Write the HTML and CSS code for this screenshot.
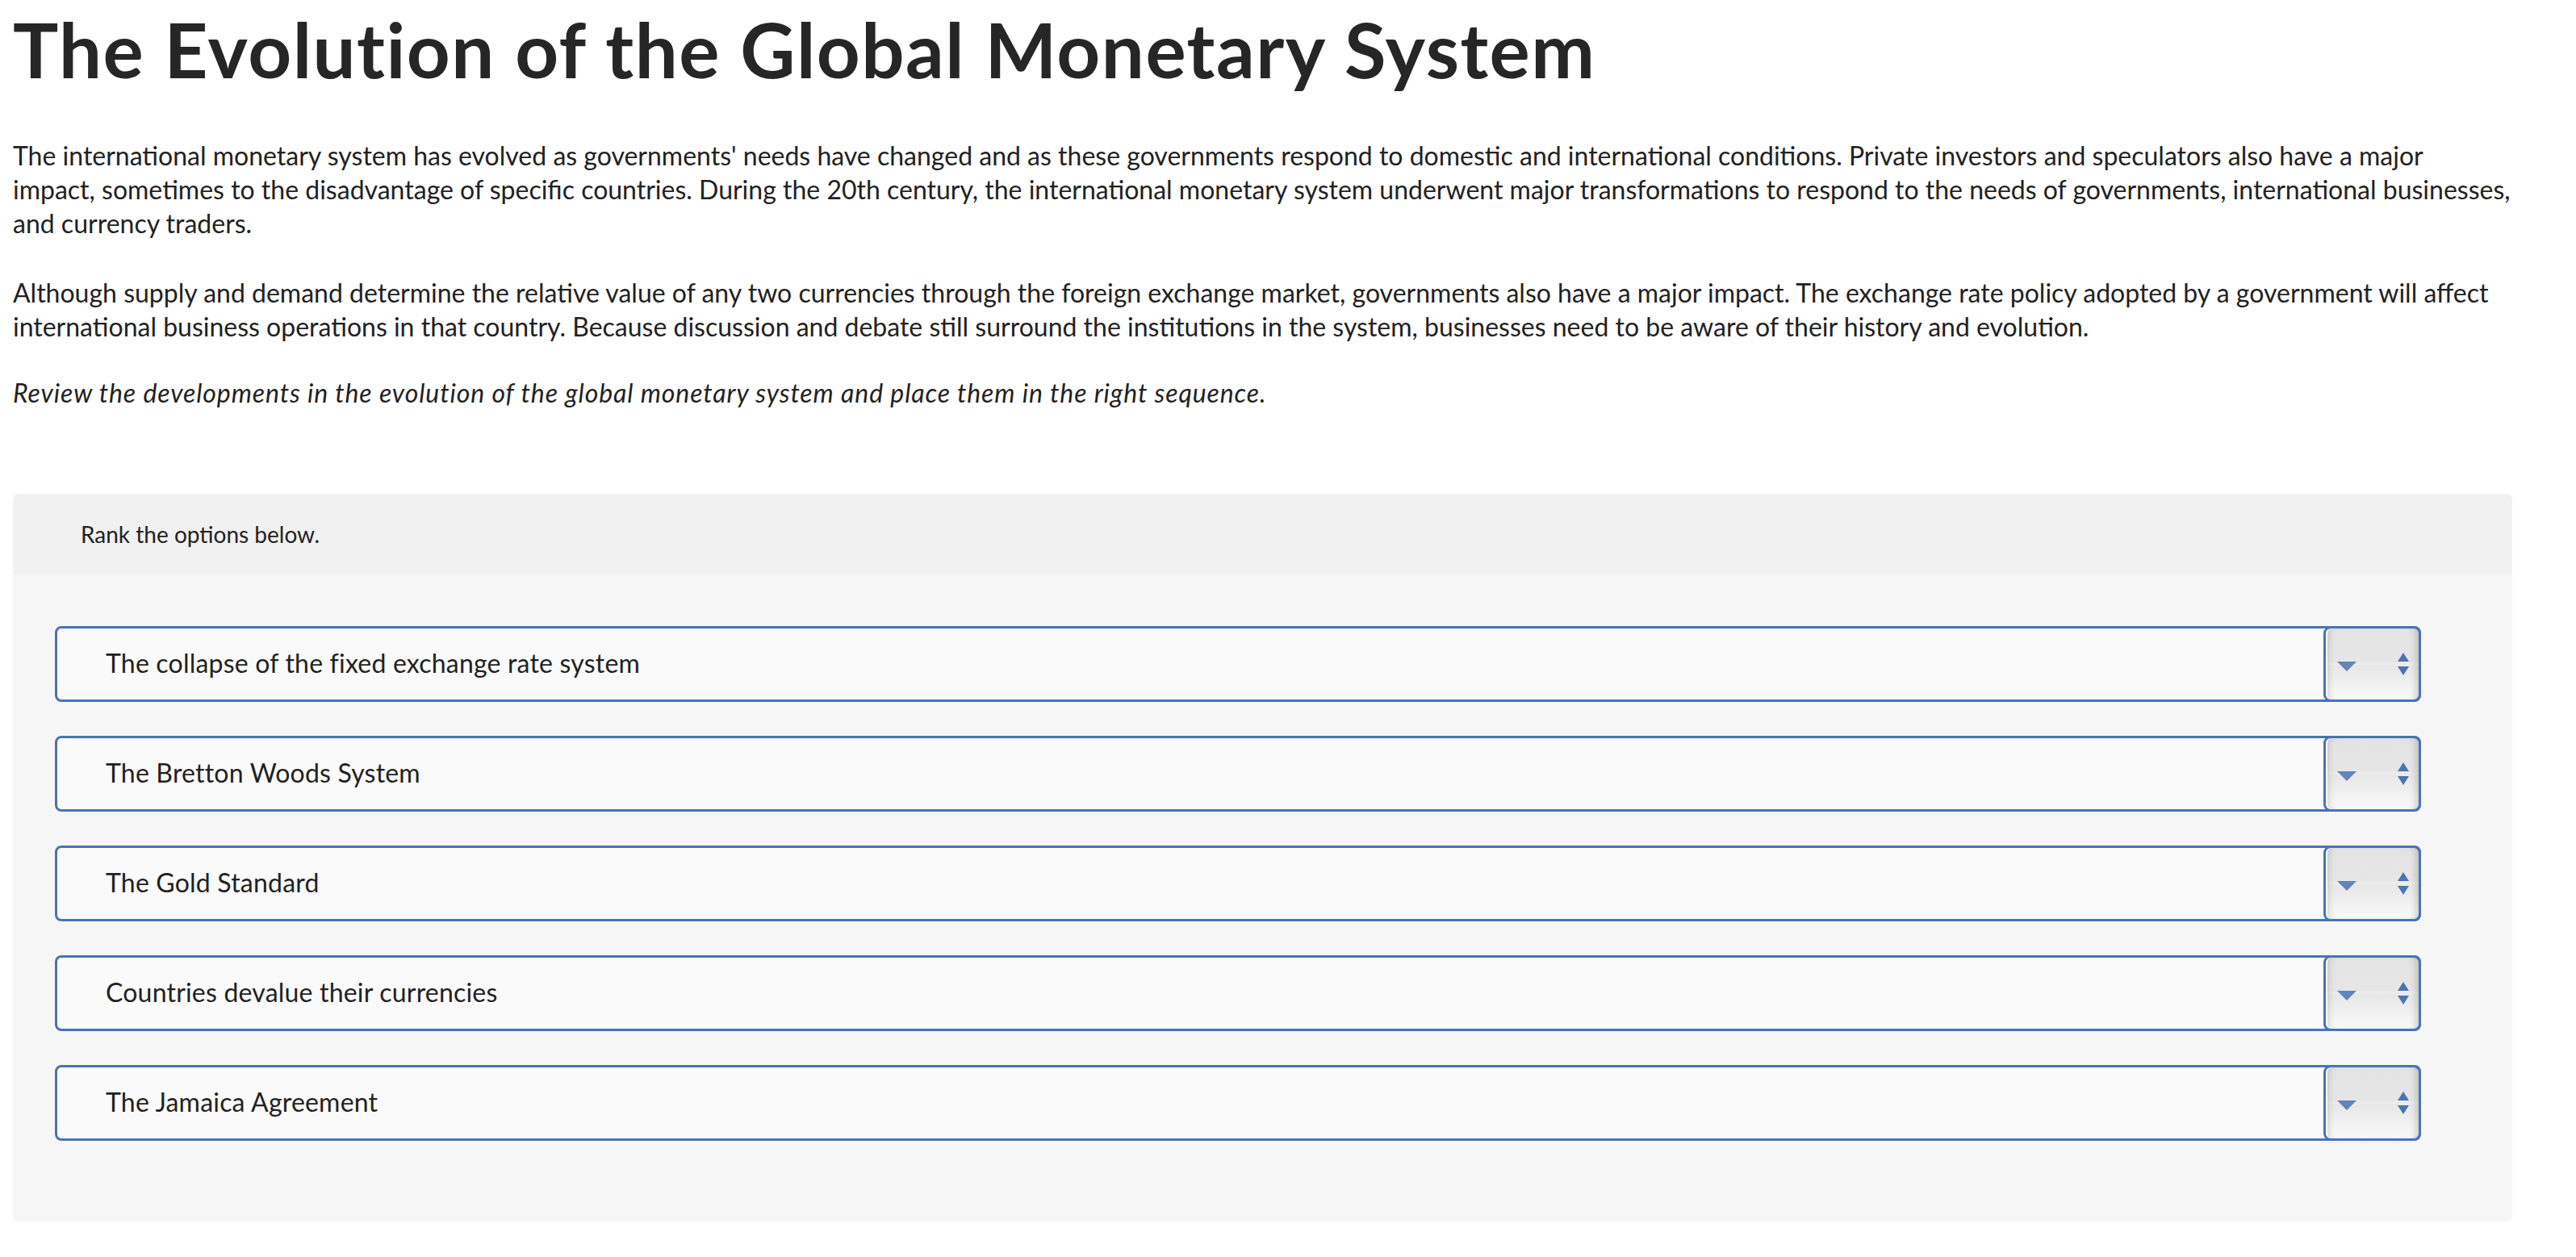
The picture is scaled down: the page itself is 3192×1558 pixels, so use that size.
FILE: index.html
```html
<!DOCTYPE html>
<html lang="en">
<head>
<meta charset="utf-8">
<title>The Evolution of the Global Monetary System</title>
<link rel="stylesheet" href="styles.css">
</head>
<body>
<h1 class="title">The Evolution of the Global Monetary System</h1>
<p class="para">The international monetary system has evolved as governments' needs have changed and as these governments respond to domestic and international conditions. Private investors and speculators also have a major<br>impact, sometimes to the disadvantage of specific countries. During the 20th century, the international monetary system underwent major transformations to respond to the needs of governments, international businesses,<br>and currency traders.</p>
<p class="para">Although supply and demand determine the relative value of any two currencies through the foreign exchange market, governments also have a major impact. The exchange rate policy adopted by a government will affect<br>international business operations in that country. Because discussion and debate still surround the institutions in the system, businesses need to be aware of their history and evolution.</p>
<p class="para instr">Review the developments in the evolution of the global monetary system and place them in the right sequence.</p>

<div class="rank-panel">
  <div class="rank-header">Rank the options below.</div>
  <div class="rank-list">
    <div class="rank-select">
      <span class="rank-label">The collapse of the fixed exchange rate system</span>
      <span class="rank-btn">
        <svg class="ico-down" width="24" height="12" viewBox="0 0 24 12"><path d="M0 0H24L12 12Z"/></svg>
        <svg class="ico-updown" width="14" height="28" viewBox="0 0 14 28"><path d="M7 0L14 11H0Z M0 17H14L7 28Z"/></svg>
      </span>
    </div>
    <div class="rank-select">
      <span class="rank-label">The Bretton Woods System</span>
      <span class="rank-btn">
        <svg class="ico-down" width="24" height="12" viewBox="0 0 24 12"><path d="M0 0H24L12 12Z"/></svg>
        <svg class="ico-updown" width="14" height="28" viewBox="0 0 14 28"><path d="M7 0L14 11H0Z M0 17H14L7 28Z"/></svg>
      </span>
    </div>
    <div class="rank-select">
      <span class="rank-label">The Gold Standard</span>
      <span class="rank-btn">
        <svg class="ico-down" width="24" height="12" viewBox="0 0 24 12"><path d="M0 0H24L12 12Z"/></svg>
        <svg class="ico-updown" width="14" height="28" viewBox="0 0 14 28"><path d="M7 0L14 11H0Z M0 17H14L7 28Z"/></svg>
      </span>
    </div>
    <div class="rank-select">
      <span class="rank-label">Countries devalue their currencies</span>
      <span class="rank-btn">
        <svg class="ico-down" width="24" height="12" viewBox="0 0 24 12"><path d="M0 0H24L12 12Z"/></svg>
        <svg class="ico-updown" width="14" height="28" viewBox="0 0 14 28"><path d="M7 0L14 11H0Z M0 17H14L7 28Z"/></svg>
      </span>
    </div>
    <div class="rank-select">
      <span class="rank-label">The Jamaica Agreement</span>
      <span class="rank-btn">
        <svg class="ico-down" width="24" height="12" viewBox="0 0 24 12"><path d="M0 0H24L12 12Z"/></svg>
        <svg class="ico-updown" width="14" height="28" viewBox="0 0 14 28"><path d="M7 0L14 11H0Z M0 17H14L7 28Z"/></svg>
      </span>
    </div>
  </div>
</div>
</body>
</html>
```

FILE: styles.css
```css
html, body {
  margin: 0;
  padding: 0;
  background: #ffffff;
}

body {
  padding: 0 16px;
  font-family: "Lato", "Liberation Sans", sans-serif;
  color: #222222;
  font-size: 32px;
}

.title {
  margin: 0;
  padding-top: 8px;
  font-family: "Lato", "Liberation Sans", sans-serif;
  font-weight: 700;
  font-size: 94px;
  line-height: 106px;
  color: #262626;
  letter-spacing: 1.5px;
}

.para {
  margin: 58px 0 0 0;
  font-size: 32px;
  line-height: 42px;
  letter-spacing: 0;
  white-space: nowrap;
}

.para + .para {
  margin-top: 44px;
}

.para + .instr {
  margin-top: 40px;
}

.instr {
  font-style: italic;
  letter-spacing: 0.9px;
}

.rank-panel {
  margin-top: 104px;
  width: 3097px;
  background: #f6f6f6;
  border-radius: 7px;
  padding-bottom: 100px;
}

.rank-header {
  height: 100px;
  background: #f1f1f1;
  border-radius: 7px 7px 0 0;
  display: flex;
  align-items: center;
  padding-left: 84px;
  font-size: 28px;
  color: #222222;
}

.rank-list {
  display: flex;
  flex-direction: column;
  gap: 42px;
  padding: 64px 0 0 52px;
}

.rank-select {
  box-sizing: border-box;
  width: 2932px;
  height: 94px;
  border: 3px solid #4a74b4;
  border-radius: 8px;
  background: #fafafa;
  display: flex;
  align-items: center;
  justify-content: space-between;
}

.rank-label {
  padding-left: 60px;
  padding-bottom: 4px;
  font-size: 32px;
  letter-spacing: 0.2px;
  color: #222222;
}

.rank-btn {
  box-sizing: border-box;
  align-self: stretch;
  margin: -3px -3px -3px 0;
  width: 121px;
  border: 3px solid #4a74b4;
  border-radius: 9px;
  background: linear-gradient(#e3e3e3 0%, #e6e6e6 46%, #ededed 50%, #e7e7e7 53%, #f4f4f4 85%, #f9f9f9 100%);
  box-shadow: inset 2px 0 0 #ffffff, inset 9px 0 8px -6px rgba(0, 0, 0, 0.16), inset -9px 0 8px -6px rgba(0, 0, 0, 0.18);
  display: flex;
  align-items: center;
  justify-content: space-between;
  padding: 0 12px 0 14px;
}

.ico-down {
  fill: #4a74b4;
  opacity: 0.85;
  margin-top: 6px;
}

.ico-updown {
  fill: #4a74b4;
}
```
